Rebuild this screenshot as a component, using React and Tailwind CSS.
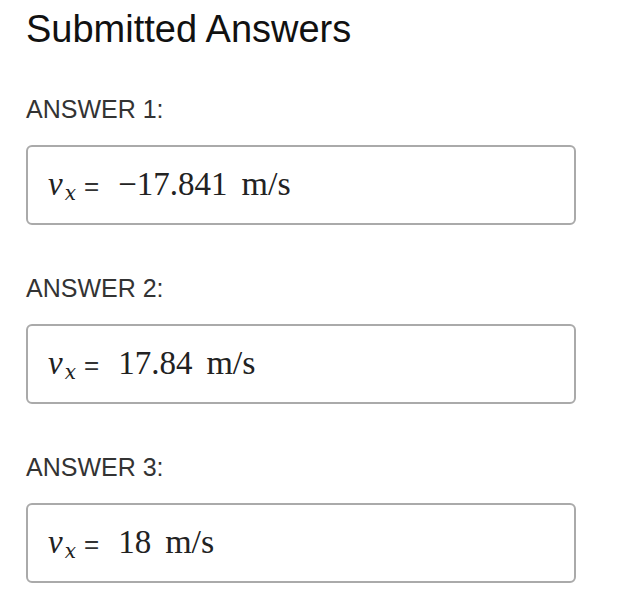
const ANSWERS = [
  { label: 'ANSWER 1:', value: '\u221217.841' },
  { label: 'ANSWER 2:', value: '17.84' },
  { label: 'ANSWER 3:', value: '18' },
];

function MathLine({ value }) {
  return (
    <div className="flex items-baseline leading-none text-[#222]">
      <span className="font-['Liberation_Serif',serif] text-[33px] italic leading-none">
        v
        <sub className="ml-[2px] font-['DejaVu_Serif',serif] text-[20px] italic">x</sub>
      </span>
      <span className="ml-[8px] font-['Liberation_Sans',Arial,sans-serif] text-[26px] leading-none text-[#333]">
        =
      </span>
      <span className="ml-[19px] font-['Liberation_Serif',serif] text-[33px] leading-none">{value}</span>
      <span className="ml-[14px] font-['Liberation_Serif',serif] text-[34px] leading-none">m/s</span>
    </div>
  );
}

export default function App() {
  return (
    <div className="min-h-[606px] w-[638px] bg-white pl-[26px] font-['Liberation_Sans',Arial,sans-serif]">
      <h2 className="pt-[10px] text-[38px] leading-none text-[#111]">Submitted Answers</h2>
      <div className="mt-[49px] flex flex-col gap-[51px]">
        {ANSWERS.map((a) => (
          <div key={a.label}>
            <div className="text-[25px] leading-none text-[#333]">{a.label}</div>
            <div className="mt-[23px] h-[80px] w-[550px] rounded-[6px] border-2 border-[#aaaaaa] pl-[20px] pt-[20px]">
              <MathLine value={a.value} />
            </div>
          </div>
        ))}
      </div>
    </div>
  );
}
